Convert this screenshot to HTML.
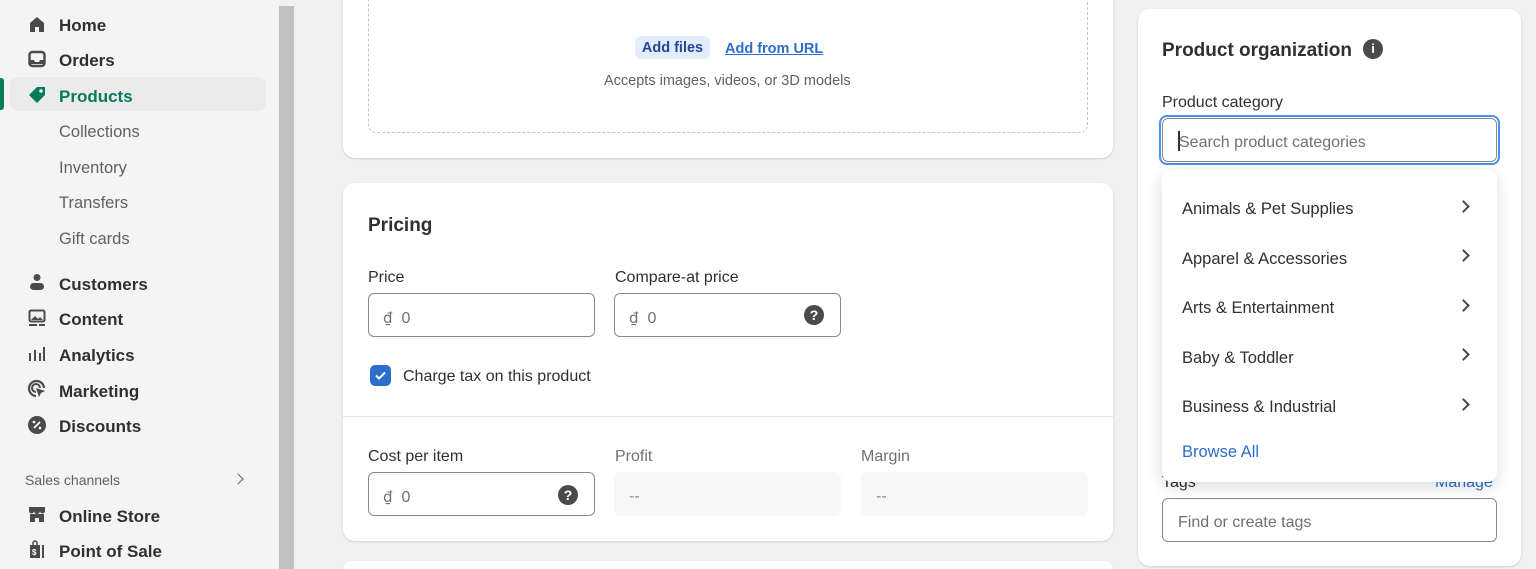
<!DOCTYPE html>
<html style="overflow:hidden;height:569px"><head><meta charset="utf-8"><style>
*{box-sizing:border-box;margin:0;padding:0}
body{width:1536px;height:569px;overflow:hidden;background:#f1f1f1;font-family:"Liberation Sans",sans-serif;color:#303030;position:relative}
.abs{position:absolute}
.side{left:0;top:0;width:278px;height:569px;background:#f4f4f4}
.scroll{left:278px;top:0;width:18px;height:569px;background:#f1f1f1}
.scroll div{position:absolute;left:1px;top:6px;width:15px;height:563px;background:#c1c1c1}
.nav{position:absolute;left:59px;font-size:17px;font-weight:600;color:#303030;margin-top:2px}
.sub{position:absolute;left:59px;font-size:16.5px;color:#616161;margin-top:2px}
.ic{position:absolute;left:27px;width:20px;height:20px}
.card{position:absolute;background:#fff;border-radius:12px;box-shadow:0 1px 2px rgba(0,0,0,.15)}
.lbl{position:absolute;font-size:16px;color:#303030;margin-top:2px}
.inp{position:absolute;height:44px;border:1px solid #8a8a8a;border-radius:6px;background:#fff}
.ph{position:absolute;font-size:16px;color:#707070;margin-top:2px}
.cur{font-family:"DejaVu Sans",sans-serif;font-size:15px}
.q{position:absolute;width:20px;height:20px;border-radius:50%;background:#4a4a4a;color:#fff;font-size:14px;font-weight:700;text-align:center;line-height:20px}
.item{position:absolute;left:1182px;font-size:16.5px;color:#303030;margin-top:2px}
.chev{position:absolute;left:1459px;width:9px;height:9px;border-right:2px solid #4a4a4a;border-top:2px solid #4a4a4a;transform:rotate(45deg)}
</style></head><body>
<div class="abs side"></div>
<div class="abs" style="left:0;top:78px;width:4px;height:32px;background:#047b5d;border-radius:0 3px 3px 0"></div>
<div class="abs" style="left:10px;top:77px;width:256px;height:34px;background:#ebebeb;border-radius:8px"></div>
<svg class="ic" style="top:14px" viewBox="0 0 20 20"><path d="M3 9L10 3l7 6v9h-5v-5H8v5H3z" fill="#4a4a4a"/></svg>
<div class="nav" style="top:14px">Home</div>
<svg class="ic" style="top:49px" viewBox="0 0 20 20"><rect x="2.5" y="3" width="15" height="14" rx="3" fill="none" stroke="#4a4a4a" stroke-width="2.4"/><path d="M3 11h4l1 2h4l1-2h4v4H3z" fill="#4a4a4a"/></svg>
<div class="nav" style="top:49px">Orders</div>
<svg class="ic" style="top:85px" viewBox="0 0 20 20"><path d="M2 10L10 2h8v8l-8 8z" fill="#047b5d"/><circle cx="14" cy="6" r="1.7" fill="#fff"/></svg>
<div class="nav" style="top:85px;color:#047b5d">Products</div>
<div class="sub" style="top:121px">Collections</div>
<div class="sub" style="top:157px">Inventory</div>
<div class="sub" style="top:192px">Transfers</div>
<div class="sub" style="top:228px">Gift cards</div>
<svg class="ic" style="top:272px" viewBox="0 0 20 20"><circle cx="10" cy="5.5" r="3.5" fill="#4a4a4a"/><rect x="3" y="11" width="14" height="7" rx="3.5" fill="#4a4a4a"/></svg>
<div class="nav" style="top:273px">Customers</div>
<svg class="ic" style="top:308px" viewBox="0 0 20 20"><rect x="2.5" y="2.5" width="15" height="11" rx="1.5" fill="none" stroke="#4a4a4a" stroke-width="2"/><path d="M4 12l4-4 3 3 2-2 3 3z" fill="#4a4a4a"/><rect x="2" y="16" width="8" height="2" fill="#4a4a4a"/><rect x="12" y="16" width="6" height="2" fill="#4a4a4a"/></svg>
<div class="nav" style="top:308px">Content</div>
<svg class="ic" style="top:344px" viewBox="0 0 20 20"><rect x="2" y="9" width="2" height="8" fill="#4a4a4a"/><rect x="7" y="6" width="2" height="11" fill="#4a4a4a"/><rect x="12" y="9" width="2" height="8" fill="#4a4a4a"/><rect x="16" y="3" width="2" height="14" fill="#4a4a4a"/></svg>
<div class="nav" style="top:344px">Analytics</div>
<svg class="ic" style="top:379px" viewBox="0 0 20 20"><path d="M9 17A7.5 7.5 0 1 1 17 9" fill="none" stroke="#4a4a4a" stroke-width="2.2"/><path d="M9 13a4 4 0 1 1 4-4" fill="none" stroke="#4a4a4a" stroke-width="2"/><path d="M9 9l9 3-4 2-2 4z" fill="#4a4a4a"/></svg>
<div class="nav" style="top:380px">Marketing</div>
<svg class="ic" style="top:415px" viewBox="0 0 20 20"><circle cx="10" cy="10" r="9" fill="#4a4a4a"/><path d="M7 13l6-6" stroke="#fff" stroke-width="1.8"/><circle cx="7" cy="7" r="1.3" fill="#fff"/><circle cx="13" cy="13" r="1.3" fill="#fff"/></svg>
<div class="nav" style="top:415px">Discounts</div>
<div class="abs" style="left:25px;top:472px;font-size:14px;color:#616161">Sales channels</div>
<div class="abs" style="left:234px;top:475px;width:8px;height:8px;border-right:1.8px solid #616161;border-top:1.8px solid #616161;transform:rotate(45deg)"></div>
<svg class="ic" style="top:504px" viewBox="0 0 20 20"><path d="M2 3h16v4a2.5 2.5 0 0 1-5 0 2.5 2.5 0 0 1-6 0 2.5 2.5 0 0 1-5 0z" fill="#4a4a4a"/><path d="M3 10h14v8h-5v-4H8v4H3z" fill="#4a4a4a"/></svg>
<div class="nav" style="top:505px">Online Store</div>
<svg class="ic" style="top:539px" viewBox="0 0 20 20"><path d="M3 6h10v13H3z" fill="#4a4a4a"/><path d="M6 6V4a2 2 0 0 1 4 0v2" fill="none" stroke="#4a4a4a" stroke-width="1.5"/><text x="5" y="16" font-size="8" fill="#fff" font-weight="700">$</text><rect x="15" y="6" width="2" height="13" fill="#4a4a4a"/></svg>
<div class="nav" style="top:540px">Point of Sale</div>
<div class="abs scroll"><div></div></div>

<div class="card" style="left:343px;top:-20px;width:770px;height:178px"></div>
<div class="abs" style="left:368px;top:-10px;width:720px;height:143px;border:1px dashed #c4c4c4;border-radius:8px"></div>
<div class="abs" style="left:635px;top:36px;width:75px;height:23px;background:#e3ecfa;border-radius:6px;font-size:14.5px;color:#1f4a99;text-align:center;line-height:25px;font-weight:600">Add files</div>
<div class="abs" style="left:725px;top:41px;font-size:14.5px;color:#2c6ecb;text-decoration:underline;font-weight:600">Add from URL</div>
<div class="abs" style="left:604px;top:73px;font-size:14.5px;color:#616161">Accepts images, videos, or 3D models</div>

<div class="card" style="left:343px;top:183px;width:770px;height:358px"></div>
<div class="abs" style="left:368px;top:215px;font-size:19px;font-weight:600">Pricing</div>
<div class="lbl" style="left:368px;top:267px">Price</div>
<div class="lbl" style="left:615px;top:267px">Compare-at price</div>
<div class="inp" style="left:368px;top:293px;width:227px"></div>
<div class="ph" style="left:383px;top:307px"><span class="cur">₫</span>&nbsp; 0</div>
<div class="inp" style="left:614px;top:293px;width:227px"></div>
<div class="ph" style="left:629px;top:307px"><span class="cur">₫</span>&nbsp; 0</div>
<div class="q" style="left:804px;top:305px">?</div>
<div class="abs" style="left:370px;top:365px;width:21px;height:21px;background:#2c6ecb;border-radius:5px"></div>
<svg class="abs" style="left:373px;top:368px" width="15" height="15" viewBox="0 0 15 15"><path d="M3 7.5l3 3 6-6" fill="none" stroke="#fff" stroke-width="2"/></svg>
<div class="lbl" style="left:403px;top:366px">Charge tax on this product</div>
<div class="abs" style="left:343px;top:416px;width:770px;height:1px;background:#e3e3e3"></div>
<div class="lbl" style="left:368px;top:446px">Cost per item</div>
<div class="lbl" style="left:615px;top:446px;color:#707070">Profit</div>
<div class="lbl" style="left:861px;top:446px;color:#707070">Margin</div>
<div class="inp" style="left:368px;top:472px;width:227px"></div>
<div class="ph" style="left:383px;top:486px"><span class="cur">₫</span>&nbsp; 0</div>
<div class="q" style="left:558px;top:485px">?</div>
<div class="abs" style="left:614px;top:472px;width:227px;height:44px;background:#f7f7f7;border-radius:6px"></div>
<div class="ph" style="left:629px;top:486px;color:#8a8a8a">--</div>
<div class="abs" style="left:861px;top:472px;width:227px;height:44px;background:#f7f7f7;border-radius:6px"></div>
<div class="ph" style="left:876px;top:486px;color:#8a8a8a">--</div>
<div class="card" style="left:343px;top:561px;width:770px;height:8px;border-radius:12px 12px 0 0"></div>

<div class="card" style="left:1138px;top:9px;width:383px;height:557px"></div>
<div class="abs" style="left:1162px;top:40px;font-size:19px;font-weight:700">Product organization</div>
<div class="q" style="left:1363px;top:39px;font-size:13px">i</div>
<div class="lbl" style="left:1162px;top:92px">Product category</div>
<div class="abs" style="left:1159px;top:115px;width:341px;height:50px;border:2px solid #4b8ff0;border-radius:8px"></div>
<div class="abs" style="left:1162px;top:118px;width:335px;height:44px;border:1px solid #8a8a8a;border-radius:6px;background:#fff"></div>
<div class="abs" style="left:1178px;top:131px;width:1.5px;height:20px;background:#303030"></div>
<div class="ph" style="left:1179px;top:132px">Search product categories</div>
<div class="lbl" style="left:1162px;top:472px">Tags</div>
<div class="lbl" style="left:1435px;top:472px;color:#2c6ecb">Manage</div>
<div class="inp" style="left:1162px;top:498px;width:335px"></div>
<div class="ph" style="left:1178px;top:512px">Find or create tags</div>
<div class="abs" style="left:1162px;top:170px;width:335px;height:312px;background:#fff;border-radius:10px;box-shadow:0 4px 16px rgba(0,0,0,.15)"></div>
<div class="item" style="top:198px">Animals &amp; Pet Supplies</div><div class="chev" style="top:202px"></div>
<div class="item" style="top:248px">Apparel &amp; Accessories</div><div class="chev" style="top:251px"></div>
<div class="item" style="top:297px">Arts &amp; Entertainment</div><div class="chev" style="top:301px"></div>
<div class="item" style="top:347px">Baby &amp; Toddler</div><div class="chev" style="top:350px"></div>
<div class="item" style="top:396px">Business &amp; Industrial</div><div class="chev" style="top:400px"></div>
<div class="item" style="top:441px;color:#2c6ecb">Browse All</div>
</body></html>
